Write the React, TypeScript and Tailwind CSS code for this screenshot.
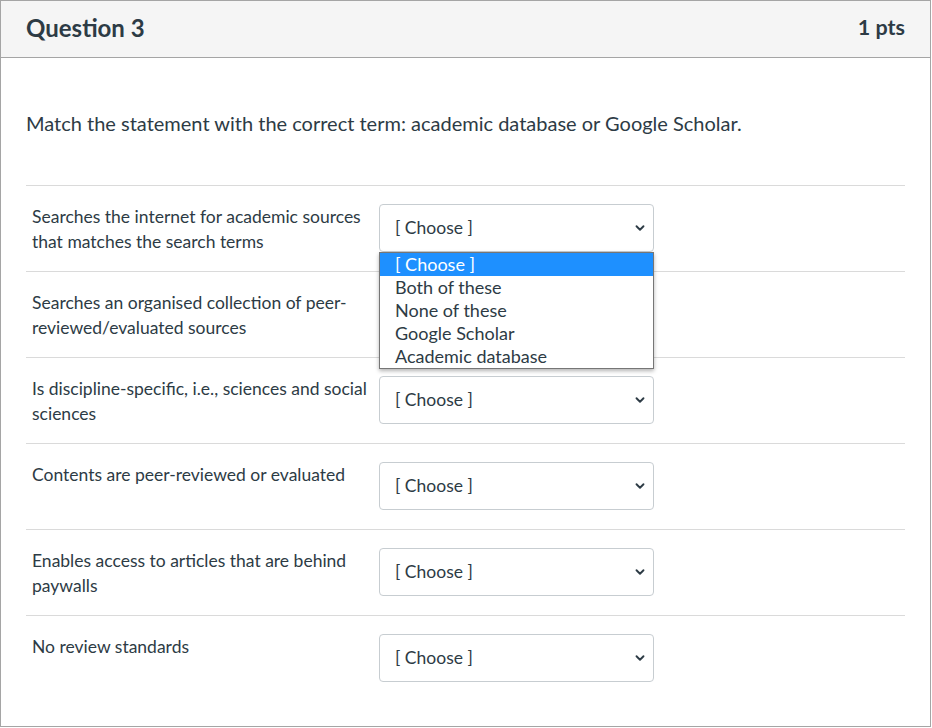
import { ChevronDown } from "lucide-react";

const rows = [
  { text: "Searches the internet for academic sources that matches the search terms", open: true },
  { text: "Searches an organised collection of peer-reviewed/evaluated sources" },
  { text: "Is discipline-specific, i.e., sciences and social sciences" },
  { text: "Contents are peer-reviewed or evaluated" },
  { text: "Enables access to articles that are behind paywalls" },
  { text: "No review standards" },
];

const options = ["[ Choose ]", "Both of these", "None of these", "Google Scholar", "Academic database"];

function Select({ open }: { open?: boolean }) {
  return (
    <div className="relative">
      <div className="w-[275px] h-[48px] border border-[#c7cdd1] rounded-[4px] bg-white flex items-center justify-between pl-[15px] pr-[4px] text-[17.5px]">
        <span>[ Choose ]</span>
        <ChevronDown className="w-[14px] h-[14px] text-[#2d3b45] mr-[2px]" strokeWidth={3.2} />
      </div>
      {open && (
        <div className="absolute left-0 top-[48px] z-10 w-[275px] bg-white border border-[#767676] shadow-[0_2px_4px_rgba(0,0,0,0.3)] text-[18px] leading-[22px]">
          {options.map((o, i) => (
            <div
              key={o}
              className={
                i === 0
                  ? "bg-[#1e90ff] text-white pl-[15px] h-[23px]"
                  : "pl-[15px] h-[23px]"
              }
            >
              {o}
            </div>
          ))}
        </div>
      )}
    </div>
  );
}

export default function App() {
  return (
    <div className="w-[932px] h-[728px] bg-white text-[#2d3b45] font-['Lato',sans-serif]">
      <div className="w-[931px] h-[727px] border border-[#a5a5a5] flex flex-col">
        <div className="h-[57px] bg-[#f5f5f5] border-b border-[#a5a5a5] flex items-center justify-between px-[25px] pb-[3px]">
          <h2 className="text-[24px] font-bold">Question 3</h2>
          <span className="text-[21.5px] font-bold">1 pts</span>
        </div>
        <div className="px-[25px] pt-[50px]">
          <p className="text-[20px] leading-[30px] mb-[47px]">
            Match the statement with the correct term: academic database or Google Scholar.
          </p>
          <div>
            {rows.map((r) => (
              <div key={r.text} className="border-t border-[#dadada] h-[86px] flex pt-[18px] pl-[6px]">
                <div className="w-[347px] pr-[8px] text-[17.5px] leading-[25px]">{r.text}</div>
                <Select open={r.open} />
              </div>
            ))}
          </div>
        </div>
      </div>
    </div>
  );
}
